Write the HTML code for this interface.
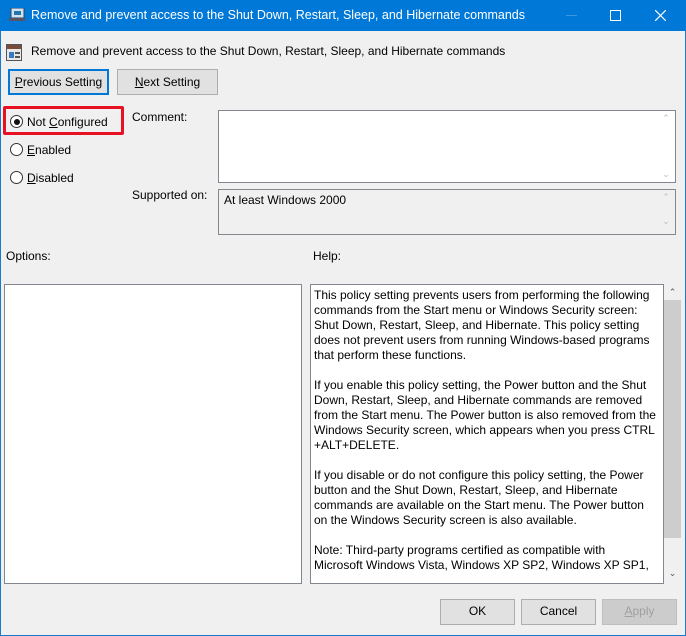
<!DOCTYPE html>
<html><head><style>
*{margin:0;padding:0;box-sizing:border-box}
body{width:686px;height:636px;background:#f0f0f0;font-family:"Liberation Sans",sans-serif;font-size:12px;color:#000;position:relative;overflow:hidden}
.win{position:absolute;left:0;top:0;width:686px;height:636px;border:1px solid #1979ca;border-top:none}
.title{position:absolute;left:0;top:0;width:686px;height:31px;background:#0078d7;color:#fff;font-size:12.5px}
.abs{position:absolute}
.btn{position:absolute;background:#e1e1e1;border:1px solid #adadad;text-align:center;font-size:12px;line-height:23px}
.box{position:absolute;background:#fff;border:1px solid #7a7a7a}
.radio{position:absolute;width:13px;height:13px;border:1px solid #333;border-radius:50%;background:#fff}
.lbl{position:absolute;white-space:nowrap}
.help{position:absolute;left:314px;top:288px;width:350px;line-height:15px;font-size:12px;white-space:nowrap}
</style></head><body>
<div class="win"></div>
<div class="title">
 <svg class="abs" style="left:9px;top:8px" width="16" height="14"><rect x="2" y="0" width="13" height="10" fill="#cfe3f7" stroke="#345"/><rect x="0" y="10" width="16" height="3" fill="#556"/><rect x="5" y="3" width="7" height="4" fill="#27a"/></svg>
 <div class="lbl" style="left:31px;top:8px">Remove and prevent access to the Shut Down, Restart, Sleep, and Hibernate commands</div>
 <div class="abs" style="left:566px;top:15px;width:11px;height:1px;background:#3d96e0"></div>
 <div class="abs" style="left:610px;top:10px;width:11px;height:11px;border:1px solid #fff"></div>
 <svg class="abs" style="left:655px;top:10px" width="11" height="11"><path d="M0 0L11 11M11 0L0 11" stroke="#fff" stroke-width="1.2"/></svg>
</div>
<svg class="abs" style="left:6px;top:44px" width="16" height="17"><rect x="0.5" y="0.5" width="15" height="16" fill="#e8e8e8" stroke="#555"/><rect x="1" y="1" width="14" height="4" fill="#7a4a3a"/><rect x="3" y="8" width="5" height="6" fill="#3a7ac0"/><rect x="9" y="8" width="5" height="2" fill="#555"/><rect x="9" y="12" width="5" height="2" fill="#555"/></svg>
<div class="lbl" style="left:31px;top:44px">Remove and prevent access to the Shut Down, Restart, Sleep, and Hibernate commands</div>
<div class="btn" style="left:8px;top:69px;width:101px;height:26px;border:2px solid #0078d7;line-height:22px"><u>P</u>revious Setting</div>
<div class="btn" style="left:117px;top:69px;width:101px;height:26px;line-height:24px"><u>N</u>ext Setting</div>
<div class="abs" style="left:3px;top:106px;width:121px;height:29px;border:3px solid #e81123;border-radius:2px"></div>
<div class="radio" style="left:10px;top:115px"><div class="abs" style="left:2.5px;top:2.5px;width:6px;height:6px;border-radius:50%;background:#111"></div></div>
<div class="lbl" style="left:27px;top:115px">Not <u>C</u>onfigured</div>
<div class="radio" style="left:10px;top:143px"></div>
<div class="lbl" style="left:27px;top:143px"><u>E</u>nabled</div>
<div class="radio" style="left:10px;top:171px"></div>
<div class="lbl" style="left:27px;top:171px"><u>D</u>isabled</div>
<div class="lbl" style="left:132px;top:110px">Comment:</div>
<div class="box" style="left:218px;top:110px;width:458px;height:73px;border-color:#828790"></div>
<div class="abs" style="left:657px;top:111px;width:18px;height:71px;background:#fff;color:#bbb;font-size:9px;text-align:center;line-height:14px">&#8963;<br><br><br><br>&#8964;</div>
<div class="lbl" style="left:132px;top:188px">Supported on:</div>
<div class="box" style="left:218px;top:189px;width:458px;height:46px;background:#f0f0f0;border-color:#828790"></div>
<div class="lbl" style="left:224px;top:193px">At least Windows 2000</div>
<div class="abs" style="left:657px;top:191px;width:18px;height:42px;color:#bbb;font-size:9px;text-align:center;line-height:12px">&#8963;<br><br>&#8964;</div>
<div class="lbl" style="left:6px;top:249px">Options:</div>
<div class="lbl" style="left:313px;top:249px">Help:</div>
<div class="box" style="left:4px;top:284px;width:298px;height:300px;border-color:#828790"></div>
<div class="box" style="left:310px;top:284px;width:354px;height:300px;border-color:#828790"></div>
<div class="abs" style="left:664px;top:284px;width:17px;height:300px;background:#f0f0f0"></div>
<div class="abs" style="left:664px;top:300px;width:17px;height:238px;background:#cdcdcd"></div>
<div class="abs" style="left:664px;top:287px;width:17px;color:#555;font-size:9px;text-align:center">&#8963;</div>
<div class="abs" style="left:664px;top:568px;width:17px;color:#555;font-size:9px;text-align:center">&#8964;</div>
<div class="help">This policy setting prevents users from performing the following<br>commands from the Start menu or Windows Security screen:<br>Shut Down, Restart, Sleep, and Hibernate. This policy setting<br>does not prevent users from running Windows-based programs<br>that perform these functions.<br><br>If you enable this policy setting, the Power button and the Shut<br>Down, Restart, Sleep, and Hibernate commands are removed<br>from the Start menu. The Power button is also removed from the<br>Windows Security screen, which appears when you press CTRL<br>+ALT+DELETE.<br><br>If you disable or do not configure this policy setting, the Power<br>button and the Shut Down, Restart, Sleep, and Hibernate<br>commands are available on the Start menu. The Power button<br>on the Windows Security screen is also available.<br><br>Note: Third-party programs certified as compatible with<br>Microsoft Windows Vista, Windows XP SP2, Windows XP SP1,</div>
<div class="btn" style="left:440px;top:599px;width:75px;height:26px">OK</div>
<div class="btn" style="left:521px;top:599px;width:75px;height:26px">Cancel</div>
<div class="btn" style="left:602px;top:599px;width:75px;height:26px;background:#ccc;border-color:#bfbfbf;color:#a0a0a0"><u>A</u>pply</div>
</body></html>
